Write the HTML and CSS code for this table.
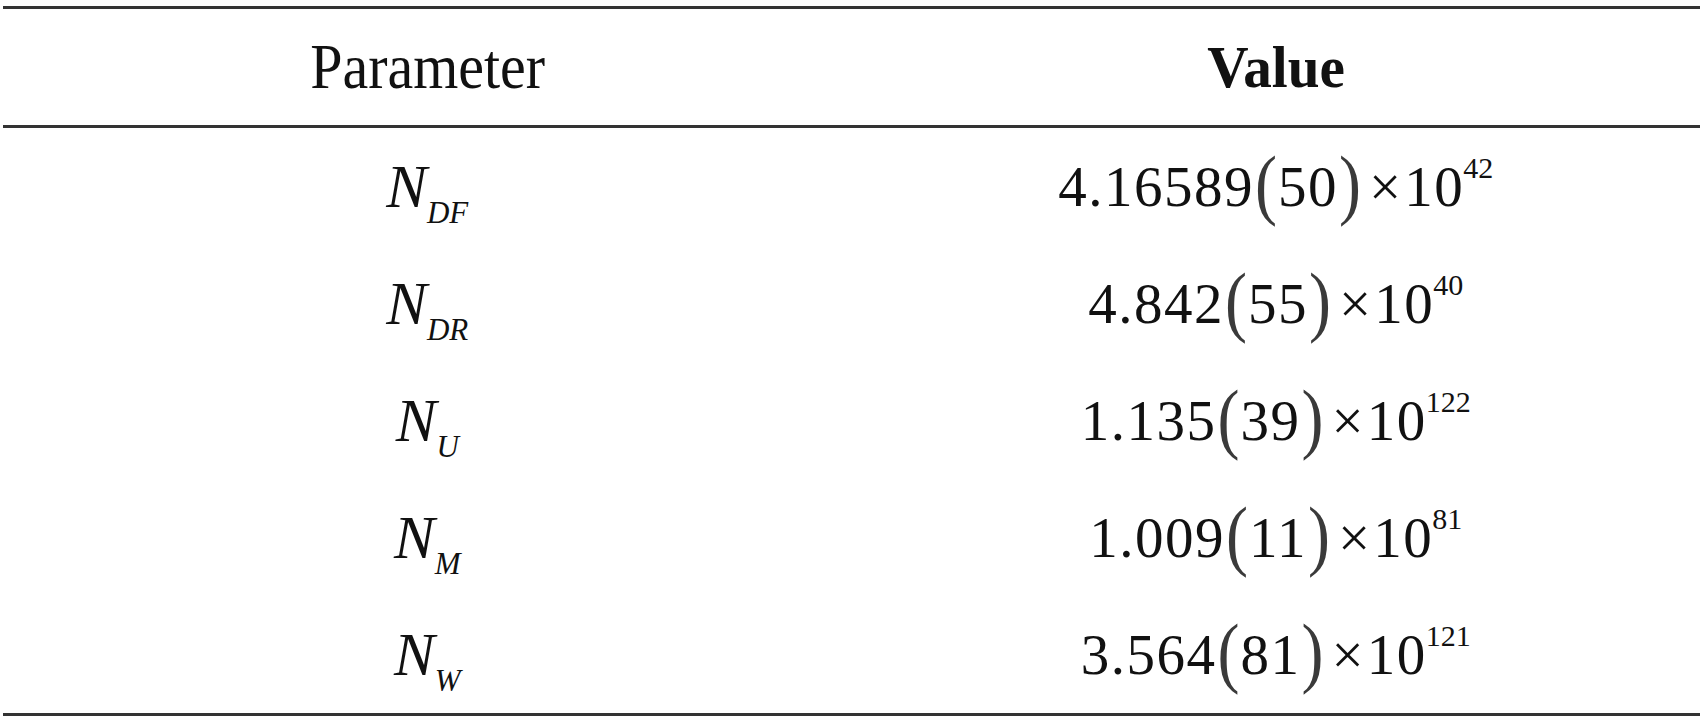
FILE: index.html
```html
<!DOCTYPE html>
<html>
<head>
<meta charset="utf-8">
<link rel="stylesheet" href="styles.css">
</head>
<body>
<div class="tbl">
  <div class="row head">
    <div class="cell"><span class="h-param">Parameter</span></div>
    <div class="cell"><span class="h-value">Value</span></div>
  </div>
  <div class="tbody">
    <div class="row">
      <div class="cell c-sym"><span class="n">N</span><span class="sub">DF</span></div>
      <div class="cell c-num"><span class="num">4.16589</span><span class="paren">(</span><span class="num">50</span><span class="paren">)</span><span class="times">×</span><span class="num">10</span><span class="sup">42</span></div>
    </div>
    <div class="row">
      <div class="cell c-sym"><span class="n">N</span><span class="sub">DR</span></div>
      <div class="cell c-num"><span class="num">4.842</span><span class="paren">(</span><span class="num">55</span><span class="paren">)</span><span class="times">×</span><span class="num">10</span><span class="sup">40</span></div>
    </div>
    <div class="row">
      <div class="cell c-sym"><span class="n">N</span><span class="sub">U</span></div>
      <div class="cell c-num"><span class="num">1.135</span><span class="paren">(</span><span class="num">39</span><span class="paren">)</span><span class="times">×</span><span class="num">10</span><span class="sup">122</span></div>
    </div>
    <div class="row">
      <div class="cell c-sym"><span class="n">N</span><span class="sub">M</span></div>
      <div class="cell c-num"><span class="num">1.009</span><span class="paren">(</span><span class="num">11</span><span class="paren">)</span><span class="times">×</span><span class="num">10</span><span class="sup">81</span></div>
    </div>
    <div class="row">
      <div class="cell c-sym"><span class="n">N</span><span class="sub">W</span></div>
      <div class="cell c-num"><span class="num">3.564</span><span class="paren">(</span><span class="num">81</span><span class="paren">)</span><span class="times">×</span><span class="num">10</span><span class="sup">121</span></div>
    </div>
  </div>
</div>
</body>
</html>
```

FILE: styles.css
```css
html, body {
  margin: 0;
  padding: 0;
  background: #ffffff;
}

body {
  font-family: "Liberation Serif", "Times New Roman", serif;
  color: #111111;
}

.tbl {
  margin: 6px 0 0 3px;
  width: 1697px;
  border-top: 3px solid #333333;
  border-bottom: 3px solid #333333;
}

.row {
  display: grid;
  grid-template-columns: 1fr 1fr;
  height: 117px;
  align-items: center;
}

.head {
  height: 116px;
  border-bottom: 3px solid #333333;
}

.cell {
  text-align: center;
  white-space: nowrap;
}

.h-param {
  display: inline-block;
  font-size: 63px;
  line-height: 1;
  transform: scaleX(0.92);
}

.h-value {
  display: inline-block;
  font-size: 59px;
  font-weight: bold;
  line-height: 1;
  transform: scaleX(0.97);
}

.c-sym {
  font-size: 61px;
  line-height: 61px;
  font-style: italic;
}

.sub {
  font-size: 31px;
  line-height: 0;
  vertical-align: -16px;
}

.c-num {
  font-size: 57px;
  line-height: 57px;
}

.num {
  letter-spacing: 1.5px;
}

.paren {
  display: inline-block;
  font-size: 66px;
  line-height: 0;
  color: #3a3a3a;
  transform: scaleY(1.2);
  margin: 0 1px;
}

.times {
  margin: 0 3px 0 7px;
}

.sup {
  font-size: 30px;
  line-height: 0;
  vertical-align: 28px;
  margin-left: -1px;
}
```
